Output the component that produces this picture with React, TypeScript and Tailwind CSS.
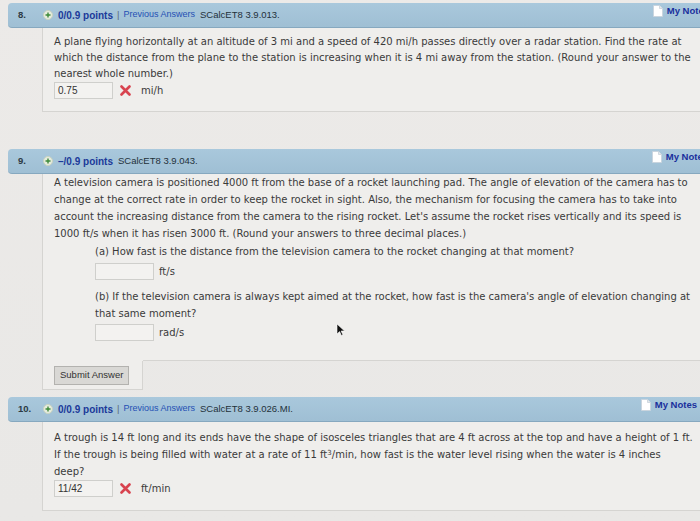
import React from 'react';

interface HeaderProps {
  num: string;
  points: string;
  previous?: boolean;
  code: string;
  notesClass: string;
}

function PlusDot() {
  return (
    <span className="w-[10px] h-[10px] rounded-full bg-[#e6ecde] border border-[#c9d3c0] flex items-center justify-center">
      <svg width="6" height="6" viewBox="0 0 6 6">
        <path d="M3 0.5v5M0.5 3h5" stroke="#3d8a3a" strokeWidth="1.4" />
      </svg>
    </span>
  );
}

function DocIcon() {
  return (
    <svg width="10" height="12" viewBox="0 0 10 12">
      <path d="M0.5 0.5h6l3 3v8h-9z" fill="#ffffff" stroke="#c8d2da" strokeWidth="0.8" />
      <path d="M6.5 0.5v3h3" fill="#e4e8ec" stroke="#c8d2da" strokeWidth="0.8" />
    </svg>
  );
}

function QuestionHeader({ num, points, previous, code, notesClass }: HeaderProps) {
  return (
    <div className="h-[25px] flex items-center rounded-l-[4px] bg-gradient-to-b from-[#a9c8dc] to-[#9fbfd4] border-b border-[#86a8bf] overflow-hidden font-['Liberation_Sans',Arial,sans-serif] text-[9.5px]">
      <span className="w-[35px] pl-[10px] font-bold text-[#2c3a44]">{num}</span>
      <PlusDot />
      <span className="ml-[5px] font-bold text-[#1b3a9a] text-[10px]">{points}</span>
      {previous && (
        <>
          <span className="ml-[4px] text-[#5a6c7a]">|</span>
          <span className="ml-[4px] text-[#2450b4] text-[9px]">Previous Answers</span>
        </>
      )}
      <span className="ml-[5px] text-[#23313a]">{code}</span>
      <span className={`ml-auto self-start mt-[1px] flex items-center gap-[4px] font-bold text-[#1a2f9c] whitespace-nowrap ${notesClass}`}>
        <DocIcon />
        My Notes
      </span>
    </div>
  );
}

function AnswerBox({ value }: { value?: string }) {
  return (
    <span className="inline-flex items-center w-[59px] h-[17px] border border-[#cfcfcc] bg-[#f3f2f0] px-[3px] font-['Liberation_Sans',Arial,sans-serif] text-[10px] text-[#333]">
      {value}
    </span>
  );
}

function WrongMark() {
  return (
    <svg width="11" height="11" viewBox="0 0 11 11" className="ml-[7px]">
      <path d="M1.5 1.5l8 8M9.5 1.5l-8 8" stroke="#d8434f" strokeWidth="2.6" strokeLinecap="round" />
    </svg>
  );
}

export default function App() {
  return (
    <div className="relative w-[700px] h-[521px] overflow-hidden bg-gradient-to-b from-[#eceae8] to-[#e9e8e6] pl-[8px] pt-[3px] font-['DejaVu_Sans',Verdana,sans-serif] text-[10px] text-[#3a3a3a]">
      {/* Question 8 */}
      <QuestionHeader num="8." points="0/0.9 points" previous code="SCalcET8 3.9.013." notesClass="mr-[-9px]" />
      <div className="ml-[34px] border-l border-b border-[#d5d4d1] bg-[#efeeec] pl-[11px] pr-[6px] pt-[6px] pb-[12px] leading-[16px]">
        <p>
          A plane flying horizontally at an altitude of 3 mi and a speed of 420 mi/h passes directly over a radar station. Find the rate at which the distance from the plane to the station is increasing when it is 4 mi away from the station. (Round your answer to the nearest whole number.)
        </p>
        <div className="flex items-center">
          <AnswerBox value="0.75" />
          <WrongMark />
          <span className="ml-[10px]">mi/h</span>
        </div>
      </div>

      {/* Question 9 */}
      <div className="mt-[37px]">
        <QuestionHeader num="9." points="–/0.9 points" code="SCalcET8 3.9.043." notesClass="mr-[-8px]" />
        <div className="ml-[34px] border-l border-[#d5d4d1] bg-[#efeeec] pl-[11px] pr-[6px] leading-[17px]">
          <p>
            A television camera is positioned 4000 ft from the base of a rocket launching pad. The angle of elevation of the camera has to change at the correct rate in order to keep the rocket in sight. Also, the mechanism for focusing the camera has to take into account the increasing distance from the camera to the rising rocket. Let's assume the rocket rises vertically and its speed is 1000 ft/s when it has risen 3000 ft. (Round your answers to three decimal places.)
          </p>
          <div className="pl-[41px]">
            <p className="mt-[1px]">(a) How fast is the distance from the television camera to the rocket changing at that moment?</p>
            <div className="flex items-center mt-[3px]">
              <AnswerBox />
              <span className="ml-[5px]">ft/s</span>
            </div>
            <p className="mt-[8px]">
              (b) If the television camera is always kept aimed at the rocket, how fast is the camera's angle of elevation changing at that same moment?
            </p>
            <div className="flex items-center mt-[2px] pb-[20px]">
              <AnswerBox />
              <span className="ml-[5px]">rad/s</span>
            </div>
          </div>
        </div>
        <div className="flex">
          <div className="w-[101px] ml-[34px] border-l border-b border-r border-[#d5d4d1] bg-[#efeeec] pl-[11px] pt-[5px] pb-[4px]">
            <button className="h-[19px] px-[5px] bg-[#d9d8d5] border border-[#b3b2af] font-['Liberation_Sans',Arial,sans-serif] text-[9.5px] text-[#333] whitespace-nowrap">
              Submit Answer
            </button>
          </div>
          <div className="flex-1 h-[1px] bg-[#d5d4d1] -mt-[1px]" />
        </div>
      </div>

      {/* Question 10 */}
      <div className="mt-[7px]">
        <QuestionHeader num="10." points="0/0.9 points" previous code="SCalcET8 3.9.026.MI." notesClass="mr-[3px]" />
        <div className="ml-[34px] border-l border-b border-[#d5d4d1] bg-[#efeeec] pl-[11px] pr-[6px] pt-[7px] pb-[13px] leading-[17px]">
          <p>
            A trough is 14 ft long and its ends have the shape of isosceles triangles that are 4 ft across at the top and have a height of 1 ft. If the trough is being filled with water at a rate of 11 ft<sup className="text-[7px] leading-none">3</sup>/min, how fast is the water level rising when the water is 4 inches deep?
          </p>
          <div className="flex items-center">
            <AnswerBox value="11/42" />
            <WrongMark />
            <span className="ml-[10px]">ft/min</span>
          </div>
        </div>
      </div>

      {/* mouse pointer */}
      <svg width="9" height="13" viewBox="0 0 9 13" className="absolute left-[336px] top-[323px]">
        <path d="M1 1v10l2.6-2.4 1.8 3.9 1.5-.7-1.8-3.8H8.6z" fill="#111" stroke="#fff" strokeWidth="0.6" />
      </svg>
    </div>
  );
}
